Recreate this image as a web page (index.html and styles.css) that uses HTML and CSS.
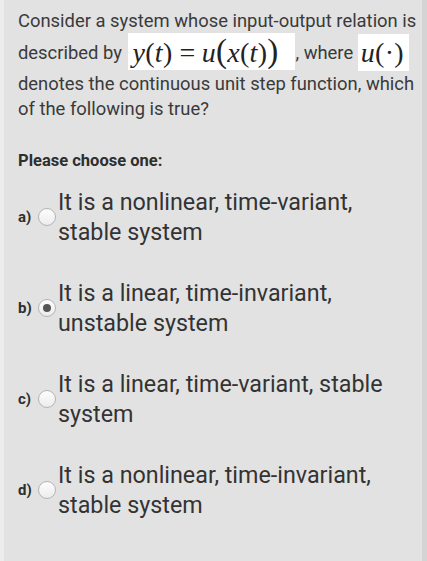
FILE: index.html
```html
<!DOCTYPE html>
<html lang="en">
<head>
<meta charset="utf-8">
<title>Question</title>
<link rel="stylesheet" href="styles.css">
</head>
<body>
<div class="page">
  <p class="question">Consider a system whose input-output relation is<br>described by <span class="math math-wide"><i>y</i>(<i>t</i>)<span class="eq">=</span><i>u</i><span class="big">(</span><i>x</i>(<i>t</i>)<span class="big">)</span></span>, where <span class="math math-narrow"><i>u</i>(·)</span><br>denotes the continuous unit step function, which<br>of the following is true?</p>

  <div class="prompt">Please choose one:</div>

  <div class="options">
    <label class="option">
      <span class="letter">a)</span>
      <span class="radio"></span>
      <span class="text">It is a nonlinear, time-variant, stable system</span>
    </label>
    <label class="option">
      <span class="letter">b)</span>
      <span class="radio checked"></span>
      <span class="text">It is a linear, time-invariant, unstable system</span>
    </label>
    <label class="option">
      <span class="letter">c)</span>
      <span class="radio"></span>
      <span class="text">It is a linear, time-variant, stable system</span>
    </label>
    <label class="option">
      <span class="letter">d)</span>
      <span class="radio"></span>
      <span class="text">It is a nonlinear, time-invariant, stable system</span>
    </label>
  </div>
</div>
</body>
</html>
```

FILE: styles.css
```css
html, body {
  margin: 0;
  padding: 0;
}
body {
  background: #e2e2e2;
  font-family: Roboto, "Liberation Sans", Arial, sans-serif;
  color: #3a3a3a;
}
.page {
  min-height: 561px;
  box-sizing: border-box;
  border-left: 4px solid #ececec;
  border-right: 5px solid #d4d4d4;
  padding: 8px 8px 0 14px;
}
.question {
  margin: 0;
  font-size: 18.4px;
  line-height: 25px;
  white-space: nowrap;
}
.math {
  display: inline-block;
  background: #ffffff;
  height: 37px;
  line-height: 37px;
  font-family: "Liberation Serif", "Times New Roman", serif;
  font-size: 28px;
  color: #222;
  vertical-align: -3px;
  box-sizing: border-box;
  letter-spacing: 0.3px;
  white-space: nowrap;
}
.math i {
  font-style: italic;
}
.math-wide {
  width: 167px;
  padding-left: 4px;
  margin-left: 2px;
}
.math-narrow {
  width: 51px;
  padding-left: 3px;
}
.eq {
  margin: 0 6px 0 7px;
}
.big {
  font-size: 33px;
}
.prompt {
  margin-top: 30px;
  font-size: 16.5px;
  line-height: 20px;
  font-weight: bold;
  color: #2e2e2e;
}
.options {
  margin-top: 16px;
  display: flex;
  flex-direction: column;
  gap: 31px;
}
.option {
  display: flex;
  align-items: center;
}
.letter {
  font-size: 15px;
  font-weight: bold;
  width: 20px;
  color: #2e2e2e;
}
.radio {
  width: 18px;
  height: 18px;
  box-sizing: border-box;
  border-radius: 50%;
  border: 1px solid #b4b4b4;
  background: linear-gradient(#fdfdfd, #ececec);
  margin-right: 2px;
  flex: none;
  display: flex;
  align-items: center;
  justify-content: center;
}
.radio.checked::after {
  content: "";
  width: 8px;
  height: 8px;
  border-radius: 50%;
  background: #555;
}
.text {
  font-size: 23.3px;
  line-height: 30px;
  width: 345px;
  color: #333;
}
```
